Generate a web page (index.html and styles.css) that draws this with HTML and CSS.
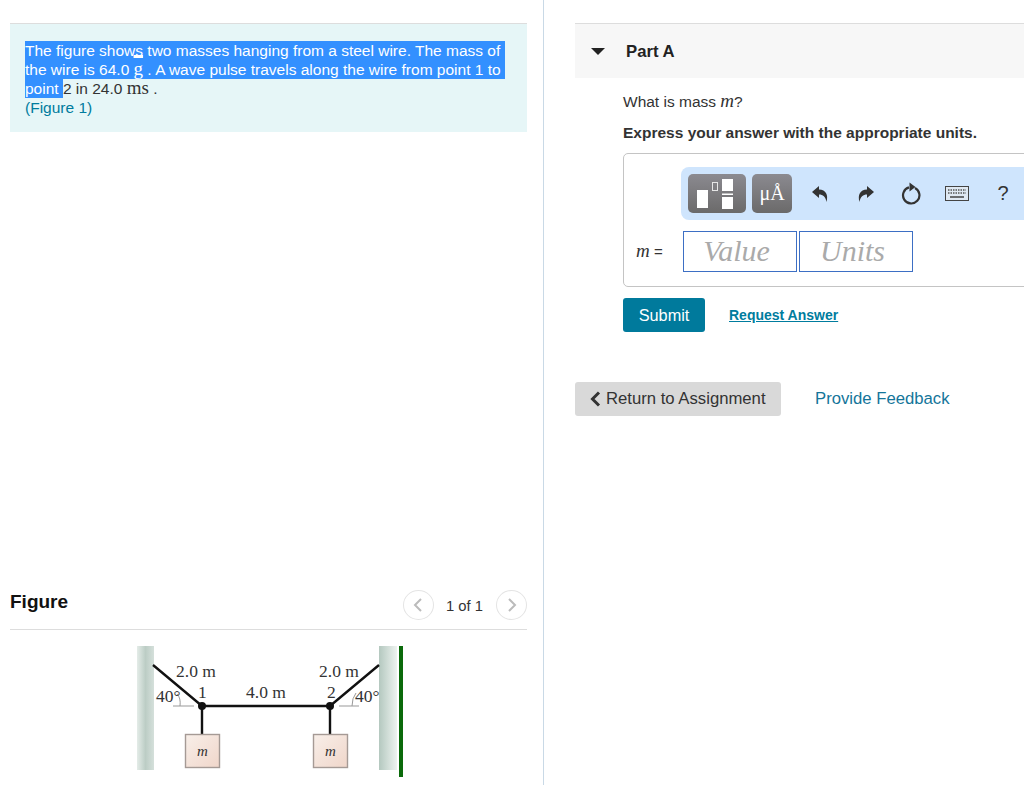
FILE: index.html
```html
<!DOCTYPE html>
<html lang="en">
<head>
    <meta charset="UTF-8">
    <title>Part A</title>
    <link rel="stylesheet" href="styles.css">
</head>
<body>
    <div class="layout">
        <div class="left-col">
            <div class="intro">
                <span class="sel">The figure shows two masses hanging from a steel wire. The mass of&nbsp;</span><br>
                <span class="sel">the wire is 64.0 <span class="unit over">g</span> . A wave pulse travels along the wire from point 1 to&nbsp;</span><br>
                <span class="sel">point&nbsp;</span>2 in 24.0 <span class="unit">ms</span> .<br>
                <a class="fig-link" href="#">(Figure 1)</a>
            </div>

            <div class="figure-head">
                <h2>Figure</h2>
                <div class="pager">
                    <span class="pager-btn">
                        <svg width="10" height="14" viewBox="0 0 10 14"><path d="M8 1 L2 7 L8 13" fill="none" stroke="#bbb" stroke-width="2"/></svg>
                    </span>
                    <span class="pager-text">1 of 1</span>
                    <span class="pager-btn">
                        <svg width="10" height="14" viewBox="0 0 10 14"><path d="M2 1 L8 7 L2 13" fill="none" stroke="#bbb" stroke-width="2"/></svg>
                    </span>
                </div>
            </div>

            <svg class="diagram" width="280" height="140" viewBox="0 0 280 140">
                <defs>
                    <linearGradient id="wallL" x1="0" x2="1" y1="0" y2="0">
                        <stop offset="0" stop-color="#e4ece8"/>
                        <stop offset="0.5" stop-color="#bccdc5"/>
                        <stop offset="1" stop-color="#d5e0db"/>
                    </linearGradient>
                    <linearGradient id="wallR" x1="0" x2="1" y1="0" y2="0">
                        <stop offset="0" stop-color="#b4c8bf"/>
                        <stop offset="1" stop-color="#eef3f0"/>
                    </linearGradient>
                    <linearGradient id="block" x1="0" x2="1" y1="0" y2="1">
                        <stop offset="0" stop-color="#f8efe9"/>
                        <stop offset="1" stop-color="#f0d6ca"/>
                    </linearGradient>
                </defs>
                <rect x="7" y="6" width="17" height="124" fill="url(#wallL)"/>
                <rect x="249" y="6" width="18" height="124" fill="url(#wallR)"/>
                <rect x="269" y="6" width="4" height="131" fill="#0a6a0a"/>
                <path d="M43 66 H64 M209 66 H229 M50 66 Q51 58 47 54 M222 66 Q222 58 226 53" fill="none" stroke="#999" stroke-width="1"/>
                <path d="M23 25 L72 66 H200 L249 25 M72 66 V94 M200 66 V94" fill="none" stroke="#111" stroke-width="2.4"/>
                <circle cx="72" cy="66" r="4" fill="#111"/>
                <circle cx="200" cy="66" r="4" fill="#111"/>
                <rect x="55.5" y="94.5" width="34" height="33" fill="url(#block)" stroke="#a59a95" stroke-width="1.4"/>
                <rect x="183.5" y="94.5" width="34" height="33" fill="url(#block)" stroke="#a59a95" stroke-width="1.4"/>
                <g class="fig-text">
                    <text x="46" y="37">2.0 m</text>
                    <text x="26" y="62">40°</text>
                    <text x="68" y="58">1</text>
                    <text x="116" y="58">4.0 m</text>
                    <text x="189" y="37">2.0 m</text>
                    <text x="197" y="58">2</text>
                    <text x="225" y="62">40°</text>
                    <text class="fig-m" x="72.5" y="116" text-anchor="middle">m</text>
                    <text class="fig-m" x="200.5" y="116" text-anchor="middle">m</text>
                </g>
            </svg>
        </div>

        <div class="right-col">
            <div class="part-head">
                <span class="caret"></span>
                <h3>Part A</h3>
            </div>
            <div class="part-body">
                <p class="question">What is mass <span class="var">m</span>?</p>
                <p class="express">Express your answer with the appropriate units.</p>

                <div class="answer-box">
                    <div class="toolbar">
                        <div class="tool-btn tool-frac">
                            <svg width="44" height="30" viewBox="0 0 44 30">
                                <rect x="2" y="11" width="11" height="18" fill="#fff"/>
                                <rect x="17.5" y="3.5" width="5" height="8" fill="none" stroke="#e6e6e6"/>
                                <rect x="27" y="0" width="11" height="12" fill="#fff"/>
                                <rect x="27" y="14.5" width="11" height="1.5" fill="#fff"/>
                                <rect x="27" y="18" width="11" height="12" fill="#fff"/>
                            </svg>
                        </div>
                        <div class="tool-btn tool-unit">μÅ</div>
                        <div class="tool-icon undo">
                            <svg width="18" height="20" viewBox="0 0 18 20"><path d="M8 2 L1 8 L8 14 V10.5 C12 10.5 14.5 12.5 15.5 18 C17.5 11 15 6 8 5.6 Z" fill="#333"/></svg>
                        </div>
                        <div class="tool-icon redo">
                            <svg width="18" height="20" viewBox="0 0 18 20"><path d="M10 2 L17 8 L10 14 V10.5 C6 10.5 3.5 12.5 2.5 18 C0.5 11 3 6 10 5.6 Z" fill="#333"/></svg>
                        </div>
                        <div class="tool-icon reset">
                            <svg width="22" height="24" viewBox="0 0 22 24"><path d="M14 6 A8.2 8.2 0 1 1 8 5.4" fill="none" stroke="#333" stroke-width="2.2"/><path d="M8.5 0.5 L14.5 5 L8.5 9.5 Z" fill="#333"/></svg>
                        </div>
                        <div class="tool-icon keyboard">
                            <svg width="24" height="15" viewBox="0 0 24 15">
                                <rect x="0.5" y="0.5" width="23" height="14" fill="#dfe8f2" stroke="#444"/>
                                <path d="M3 4 H21 M3 7 H21" stroke="#555" stroke-width="1.5" stroke-dasharray="1.5 1"/>
                                <path d="M5 11 H19" stroke="#444" stroke-width="1.5"/>
                            </svg>
                        </div>
                        <div class="tool-icon help">?</div>
                    </div>
                    <div class="input-row">
                        <span class="input-label"><span class="var">m</span> =</span>
                        <div class="math-input">Value</div>
                        <div class="math-input">Units</div>
                    </div>
                </div>

                <div class="actions">
                    <button class="submit" type="button">Submit</button>
                    <a class="request" href="#">Request Answer</a>
                </div>
            </div>

            <div class="footer-links">
                <a class="return" href="#">
                    <svg width="11" height="16" viewBox="0 0 11 16"><path d="M9 1.5 L2.5 8 L9 14.5" fill="none" stroke="#333" stroke-width="3"/></svg>
                    Return to Assignment
                </a>
                <a class="feedback" href="#">Provide Feedback</a>
            </div>
        </div>
    </div>
</body>
</html>
```

FILE: styles.css
```css
html, body {
    margin: 0;
    height: 100%;
    overflow: hidden;
}
body {
    font-family: "Liberation Sans", Arial, sans-serif;
    font-size: 16px;
    color: #333;
    background-color: #fff;
}
a {
    text-decoration: none;
}
.layout {
    display: grid;
    grid-template-columns: 544px 1fr;
    height: 785px;
}
.left-col {
    border-right: 1px solid #c9d9e6;
    padding: 23px 16px 0 10px;
}
.intro {
    background-color: #e6f6f7;
    border-top: 1px solid #ddd;
    padding: 17px 0 15px 15px;
    line-height: 19px;
    height: 76px;
    font-size: 15.5px;
    white-space: nowrap;
}
.sel {
    display: inline-block;
    background-color: #3390ff;
    color: #fff;
}
.unit {
    font-family: "Liberation Serif", serif;
    font-size: 19px;
    line-height: 0;
}
.over {
    text-decoration: overline;
    text-decoration-thickness: 3px;
}
.fig-link {
    color: #007c9e;
}
.figure-head {
    display: flex;
    justify-content: space-between;
    margin-top: 458px;
    height: 39px;
    border-bottom: 1px solid #ddd;
}
.figure-head h2 {
    margin: 1px 0 0;
    font-size: 19px;
    line-height: 22px;
    color: #111;
}
.pager {
    display: flex;
    align-items: flex-start;
}
.pager-btn {
    display: flex;
    align-items: center;
    justify-content: center;
    width: 31px;
    height: 30px;
    border: 1px solid #e4e4e4;
    border-radius: 50%;
    box-sizing: border-box;
}
.pager-text {
    font-size: 14.8px;
    line-height: 33px;
    margin: 0 13px 0 12px;
}
.diagram {
    display: block;
    margin: 10px 0 0 120px;
}
.fig-text text {
    font-family: "Liberation Serif", serif;
    font-size: 17.5px;
    fill: #333;
}
.fig-text .fig-m {
    font-style: italic;
    font-size: 15px;
}
.right-col {
    padding: 23px 0 0 31px;
    overflow: hidden;
}
.part-head {
    display: flex;
    align-items: center;
    height: 54px;
    background-color: #f7f7f7;
    border-top: 1px solid #ddd;
}
.caret {
    width: 0;
    height: 0;
    margin-left: 16px;
    border-left: 7px solid transparent;
    border-right: 7px solid transparent;
    border-top: 7px solid #222;
}
.part-head h3 {
    margin: 2px 0 0 21px;
    font-size: 16.7px;
    color: #222;
}
.part-body {
    padding-left: 48px;
}
.question {
    margin: 14px 0 0;
    line-height: 19px;
    font-size: 15.5px;
}
.var {
    font-family: "Liberation Serif", serif;
    font-style: italic;
    font-size: 19px;
    line-height: 0;
}
.express {
    margin: 12px 0 0;
    line-height: 19px;
    font-size: 15.5px;
    font-weight: bold;
}
.answer-box {
    width: 440px;
    height: 132px;
    margin-top: 11px;
    border: 1px solid #c4c4c4;
    border-radius: 5px;
}
.toolbar {
    display: flex;
    align-items: center;
    height: 53px;
    margin: 13px 0 0 57px;
    padding-left: 7px;
    background-color: #cfe5fd;
    border-radius: 8px;
}
.tool-btn {
    display: flex;
    align-items: center;
    justify-content: center;
    height: 39px;
    border-radius: 5px;
    background: linear-gradient(#8b8a90, #6b6a6a);
    color: #fff;
}
.tool-frac {
    width: 58px;
}
.tool-unit {
    width: 40px;
    margin-left: 6px;
    font-family: "Liberation Serif", serif;
    font-size: 20px;
}
.tool-icon {
    display: flex;
    justify-content: center;
    width: 30px;
}
.undo {
    margin-left: 13px;
}
.redo {
    margin-left: 16px;
}
.reset {
    margin-left: 16px;
}
.keyboard {
    margin-left: 15px;
}
.help {
    margin-left: 16px;
    font-size: 20px;
    color: #333;
}
.input-row {
    display: flex;
    align-items: center;
    margin-top: 11px;
}
.input-label {
    width: 59px;
    padding-left: 12px;
    box-sizing: border-box;
    font-size: 15px;
    white-space: nowrap;
}
.math-input {
    width: 114px;
    height: 41px;
    margin-right: 2px;
    padding-right: 7px;
    box-sizing: border-box;
    border: 1px solid #3d6fc4;
    font-family: "Liberation Serif", serif;
    font-style: italic;
    font-size: 30px;
    line-height: 37px;
    text-align: center;
    color: #aaa;
}
.actions {
    display: flex;
    align-items: center;
    margin-top: 11px;
}
.submit {
    width: 82px;
    height: 34px;
    padding: 0;
    border: none;
    border-radius: 3px;
    background-color: #007a9c;
    color: #fff;
    font-family: inherit;
    font-size: 16.3px;
}
.request {
    margin-left: 24px;
    color: #007c9e;
    font-size: 14px;
    font-weight: bold;
    text-decoration: underline;
}
.footer-links {
    display: flex;
    align-items: center;
    margin-top: 50px;
}
.return {
    display: flex;
    align-items: center;
    gap: 5px;
    width: 206px;
    height: 34px;
    padding-left: 15px;
    box-sizing: border-box;
    background-color: #d9d9d9;
    border-radius: 3px;
    color: #333;
    font-size: 16.7px;
}
.feedback {
    margin-left: 34px;
    color: #14759a;
    font-size: 16.7px;
}
```
